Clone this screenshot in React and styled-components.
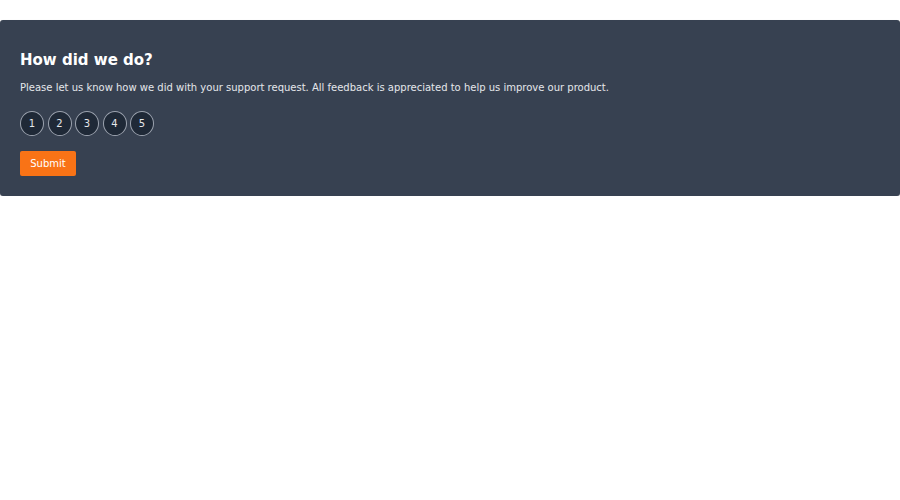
import React, {useState} from 'react';
import styled, {createGlobalStyle} from 'styled-components';

const GlobalStyle = createGlobalStyle`
  html, body {
    margin: 0;
    padding: 0;
    background: #fff;
  }
  body {
    font-family: 'DejaVu Sans', sans-serif;
  }
`;

const Page = styled.div`
  padding-top: 20px;
`;

const Card = styled.div`
  background: #374151;
  border-radius: 3px;
  padding: 30px 20px 20px;
  color: #fff;
  box-shadow: 0 1px 2px rgba(0, 0, 0, 0.15);
`;

const Title = styled.h2`
  margin: 0 0 11px;
  font-size: 15px;
  font-weight: bold;
  line-height: 20px;
`;

const Text = styled.p`
  margin: 0 0 16px;
  font-size: 10px;
  line-height: 14px;
  color: #e5e7eb;
`;

const Ratings = styled.div`
  display: flex;
  gap: 3.5px;
  margin-bottom: 15px;
`;

const Rate = styled.button`
  width: 24px;
  height: 25px;
  border-radius: 50%;
  border: 1px solid ${p => (p.$active ? '#f97316' : '#9ca3af')};
  background: ${p => (p.$active ? '#f97316' : '#1f2937')};
  color: #e5e7eb;
  font-family: 'DejaVu Sans', sans-serif;
  font-size: 10px;
  padding: 0;
  cursor: pointer;
`;

const Submit = styled.button`
  background: #f97316;
  color: #fff;
  border: none;
  border-radius: 2px;
  font-family: 'DejaVu Sans', sans-serif;
  font-size: 10px;
  height: 25px;
  width: 56px;
  padding: 0;
  cursor: pointer;
`;

export default function App() {
  const [rating, setRating] = useState(null);
  return (
    <Page>
      <GlobalStyle />
      <Card>
        <Title>How did we do?</Title>
        <Text>
          Please let us know how we did with your support request. All feedback is appreciated to help us improve our product.
        </Text>
        <Ratings>
          {[1, 2, 3, 4, 5].map(n => (
            <Rate key={n} $active={rating === n} onClick={() => setRating(n)}>
              {n}
            </Rate>
          ))}
        </Ratings>
        <Submit>Submit</Submit>
      </Card>
    </Page>
  );
}
